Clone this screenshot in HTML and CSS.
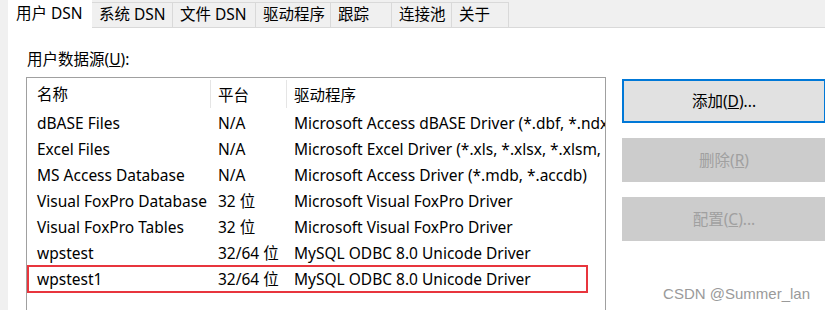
FILE: index.html
```html
<!DOCTYPE html>
<html lang="zh-CN">
<head>
<meta charset="utf-8">
<link rel="stylesheet" href="styles.css">
</head>
<body>
<div class="dialog">
  <div class="tabs">
    <div class="tab active">用户 DSN</div>
    <div class="tab t2">系统 DSN</div>
    <div class="tab t3">文件 DSN</div>
    <div class="tab t4">驱动程序</div>
    <div class="tab t5">跟踪</div>
    <div class="tab t6">连接池</div>
    <div class="tab t7">关于</div>
    <div class="tab-rest"></div>
  </div>
  <div class="panel">
    <div class="label">用户数据源(<u>U</u>):</div>
    <div class="content">
      <div class="listbox">
        <div class="row head">
          <div class="c1">名称</div>
          <div class="c2 sep">平台</div>
          <div class="c3 sep">驱动程序</div>
        </div>
        <div class="row"><div class="c1">dBASE Files</div><div class="c2">N/A</div><div class="c3">Microsoft Access dBASE Driver (*.dbf, *.ndx, *.mdx)</div></div>
        <div class="row"><div class="c1">Excel Files</div><div class="c2">N/A</div><div class="c3">Microsoft Excel Driver (*.xls, *.xlsx, *.xlsm, *.xlsb)</div></div>
        <div class="row"><div class="c1">MS Access Database</div><div class="c2">N/A</div><div class="c3">Microsoft Access Driver (*.mdb, *.accdb)</div></div>
        <div class="row"><div class="c1">Visual FoxPro Database</div><div class="c2">32 位</div><div class="c3">Microsoft Visual FoxPro Driver</div></div>
        <div class="row"><div class="c1">Visual FoxPro Tables</div><div class="c2">32 位</div><div class="c3">Microsoft Visual FoxPro Driver</div></div>
        <div class="row"><div class="c1">wpstest</div><div class="c2">32/64 位</div><div class="c3">MySQL ODBC 8.0 Unicode Driver</div></div>
        <div class="row marked"><div class="c1">wpstest1</div><div class="c2">32/64 位</div><div class="c3">MySQL ODBC 8.0 Unicode Driver</div></div>
      </div>
      <div class="buttons">
        <div class="btn primary">添加(<u>D</u>)...</div>
        <div class="btn disabled">删除(<u>R</u>)</div>
        <div class="btn disabled">配置(<u>C</u>)...</div>
      </div>
    </div>
  </div>
  <div class="watermark">CSDN @Summer_lan</div>
</div>
</body>
</html>
```
FILE: styles.css
```css
html, body {
  margin: 0;
  padding: 0;
}
body {
  width: 825px;
  height: 310px;
  overflow: hidden;
  background: #f0f0f0;
  font-family: "Noto Sans", "Noto Sans CJK SC", sans-serif;
  font-size: 15.5px;
  color: #000;
}
.dialog {
  position: relative;
  width: 825px;
  height: 310px;
}
.tabs {
  display: flex;
  height: 28px;
  margin-left: 8px;
  align-items: flex-end;
}
.tab {
  box-sizing: border-box;
  height: 26px;
  line-height: 22px;
  padding-left: 7px;
  background: #f0f0f0;
  border: 1px solid #d9d9d9;
  border-left: none;
  font-size: 15.5px;
  white-space: nowrap;
  overflow: hidden;
}
.tab.active {
  height: 28px;
  line-height: 27px;
  width: 84px;
  padding-left: 8px;
  background: #fff;
  border: none;
}
.t2 { width: 81px; }
.t3 { width: 83px; }
.t4 { width: 75px; }
.t5 { width: 61px; }
.t6 { width: 60px; }
.t7 { width: 57px; }
.tab-rest {
  flex: 1;
  height: 28px;
  box-sizing: border-box;
  border-bottom: 1px solid #d9d9d9;
}
.panel {
  margin-left: 8px;
  background: #fff;
  height: 282px;
  padding-left: 18px;
  box-sizing: border-box;
}
.label {
  padding-top: 20px;
  padding-left: 1px;
  height: 29px;
  line-height: 23px;
}
.content {
  display: flex;
  gap: 16px;
}
.listbox {
  width: 578px;
  height: 240px;
  border: 1px solid #a0a0a0;
  border-bottom: none;
  overflow: hidden;
  flex: none;
}
.row {
  display: grid;
  grid-template-columns: 183px 76px 1fr;
  height: 26px;
  line-height: 26px;
  white-space: nowrap;
  position: relative;
}
.row > div {
  overflow: hidden;
  padding-left: 8px;
}
.row .c1 { padding-left: 10px; }
.row.head {
  height: 32px;
  line-height: 33px;
}
.row.head .sep {
  border-left: 1px solid #e5e5e5;
  height: 28px;
  margin-top: 2px;
  line-height: 31px;
  padding-left: 7px;
}
.row.marked::after {
  content: "";
  position: absolute;
  left: 0;
  top: -1px;
  width: 561px;
  height: 28px;
  box-sizing: border-box;
  border: 2px solid #e8353d;
}
.buttons {
  display: flex;
  flex-direction: column;
  gap: 15px;
  padding-top: 2px;
}
.btn {
  box-sizing: border-box;
  width: 204px;
  height: 44px;
  line-height: 42px;
  text-align: center;
  background: #cccccc;
  color: #a0a0a0;
  border: 1px solid #cccccc;
}
.btn.primary {
  background: #e1e1e1;
  color: #000;
  border: 2px solid #0078d7;
  line-height: 40px;
}
.watermark {
  position: absolute;
  right: 15px;
  bottom: 8px;
  font-family: "Liberation Sans", Arial, sans-serif;
  font-size: 15px;
  color: #9a9a9a;
}
```
